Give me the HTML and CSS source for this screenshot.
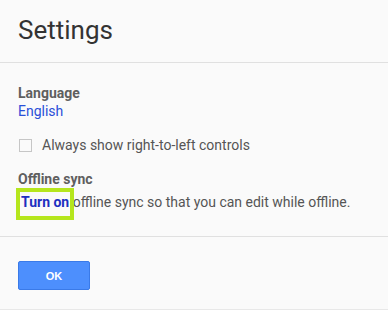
FILE: index.html
```html
<html>
<head>
<link rel="stylesheet" href="styles.css">
</head>

<body>

<div class="head">
<h1>Settings</h1>
</div>

<div class="main">

<div class="label">Language</div>
<a class="lang" href="#">English</a>

<label class="check"><span class="box"></span>Always show right-to-left controls</label>

<div class="label sync">Offline sync</div>
<p class="line"><a class="turn" href="#">Turn on</a> offline sync so that you can edit while offline.</p>

</div>

<div class="foot">
<button class="ok">OK</button>
</div>

</body>
</html>
```

FILE: styles.css
```css
body    { margin:0;background:#fafafa;font-family:Roboto,sans-serif;color:#555;
          height:310px;box-sizing:border-box;border-bottom:1px solid #e8e8e8 }
.head   { height:63px;padding:15px 18px 0;box-sizing:border-box;border-bottom:1px solid #e0e0e0 }
h1      { margin:0;font-size:26px;line-height:30px;font-weight:400;color:#333 }

.main   { padding:21px 18px 0;height:174px;box-sizing:border-box;border-bottom:1px solid #e0e0e0 }
.label  { font-size:14px;line-height:18px;font-weight:700;color:#5f5f5f }
.lang   { display:block;font-size:14px;line-height:18px;color:#2a4fd8;text-decoration:none }
.check  { display:flex;align-items:center;margin:16px 0 0 1px;font-size:14px;line-height:18px }
.box    { width:11px;height:11px;border:1px solid #c6c6c6;margin-right:10px }
.sync   { margin-top:16px }
p.line  { margin:5px 0 0;font-size:14px;line-height:18px }
.turn   { position:relative;color:#1d2fc0;font-weight:700;text-decoration:none;margin-left:3px }
.turn::after { content:"";position:absolute;top:-6px;bottom:-10px;left:-5px;right:-5px;
          border:4px solid #b5e61d }

.foot   { padding:24px 18px 0 }
.ok     { width:72px;height:29px;background:#4d8ffd;border:1px solid #3a7ae8;border-radius:2px;
          color:#fff;font-family:"Liberation Sans",sans-serif;font-size:11px;font-weight:700;padding:0 }
```
